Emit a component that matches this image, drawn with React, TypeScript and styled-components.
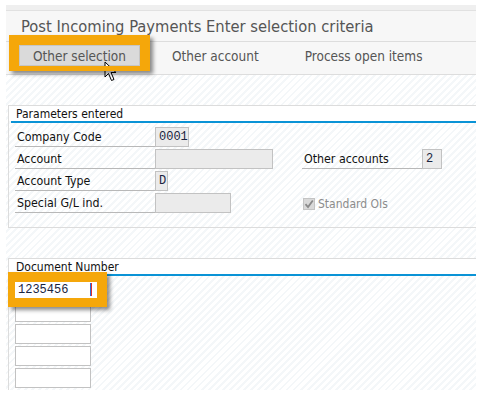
import React from "react";
import styled, { createGlobalStyle, css } from "styled-components";

const UI_FONT = `"DejaVu Sans Condensed", "DejaVu Sans", sans-serif`;
const MONO_FONT = `"Liberation Mono", "DejaVu Sans Mono", monospace`;
const ORANGE = "#f5a70a";
const BLUE = "#0a93d6";

const GlobalStyle = createGlobalStyle`
  html, body { margin: 0; padding: 0; background: #ffffff; }
  body { font-family: ${UI_FONT}; }
  * { box-sizing: border-box; }
`;

const Screen = styled.div`
  width: 470px;
  margin: 5px 0 0 6px;
  display: flex;
  flex-direction: column;
`;

const TopStrip = styled.div`
  height: 6px;
  background: #efefef;
  border-bottom: 1px solid #e1e1e1;
`;

const TitleBar = styled.div`
  height: 31px;
  background: #f7f7f7;
  border-bottom: 1px solid #dddddd;
  display: flex;
  align-items: center;
  padding-left: 15px;
  font-size: 16.4px;
  color: #555555;
  white-space: nowrap;
`;

const Toolbar = styled.div`
  height: 33px;
  background: #f7f7f7;
  border-bottom: 1px solid #dddddd;
  display: flex;
  align-items: flex-start;
  gap: 18px;
  padding: 3px 0 0 13px;
`;

const ToolButton = styled.button<{ $active?: boolean; $highlight?: boolean }>`
  position: relative;
  height: 21px;
  padding: 0 13px;
  border: 1px solid ${(p) => (p.$active ? "#c6c6c6" : "transparent")};
  background: ${(p) => (p.$active ? "#dadada" : "transparent")};
  font-family: ${UI_FONT};
  font-size: 13.5px;
  color: #555555;
  white-space: nowrap;
  cursor: default;
  ${(p) =>
    p.$highlight &&
    css`
      &::after {
        content: "";
        position: absolute;
        left: -11px;
        top: -11px;
        right: -11px;
        bottom: -6px;
        border-style: solid;
        border-color: ${ORANGE};
        border-width: 10px 10px 5px 10px;
        box-shadow: 3px 3px 4px rgba(0, 0, 0, 0.45);
        z-index: 2;
        pointer-events: none;
      }
    `}
`;

const Pointer = styled.svg`
  position: absolute;
  left: 84px;
  top: 15px;
  z-index: 1;
`;

const Body = styled.div`
  height: 315px;
  padding: 30px 0 0 2px;
  display: flex;
  flex-direction: column;
  background: repeating-linear-gradient(
    -45deg,
    #ffffff 0px,
    #ffffff 3px,
    #f4f7f9 3px,
    #f4f7f9 5px
  );
`;

const GroupBox = styled.div<{ $grow?: boolean }>`
  border: 1px solid #dcdcdc;
  border-right: none;
  ${(p) =>
    p.$grow
      ? css`
          flex: 1;
          border-bottom: none;
          margin-top: 30px;
        `
      : css`
          padding-bottom: 14px;
        `}
`;

const GroupHeader = styled.div`
  height: 15px;
  background: #ffffff;
  padding-left: 7px;
  font-size: 12px;
  line-height: 17px;
  color: #111111;
  white-space: nowrap;
  overflow: hidden;
`;

const BlueRule = styled.div`
  height: 2px;
  margin: 0 0 4px 2px;
  background: ${BLUE};
`;

const ParamGrid = styled.div`
  display: grid;
  grid-template-columns: 140px 147px 120px auto;
  grid-auto-rows: 20px;
  row-gap: 2px;
  padding-left: 6px;
`;

const Label = styled.div<{ $col?: number }>`
  grid-column: ${(p) => p.$col ?? 1};
  height: 20px;
  border-bottom: 1px solid #b8b8b8;
  padding-left: 2px;
  font-size: 12.3px;
  line-height: 21px;
  color: #111111;
  white-space: nowrap;
  overflow: hidden;
`;

const Field = styled.div<{ $w: number; $col?: number }>`
  grid-column: ${(p) => p.$col ?? 2};
  width: ${(p) => p.$w}px;
  height: 20px;
  border: 1px solid #c2c2c2;
  background: #ebebeb;
  font-family: ${MONO_FONT};
  font-size: 12px;
  line-height: 19px;
  padding-left: 3px;
  color: #1a2440;
  white-space: nowrap;
`;

const CheckCell = styled.div`
  grid-column: 3;
  display: flex;
  align-items: center;
  gap: 3px;
  padding: 1px 0 0 1px;
  font-size: 12px;
  color: #8c8c8c;
  white-space: nowrap;
`;

const CheckBox = styled.span`
  width: 12px;
  height: 12px;
  background: #d9d9d9;
  border: 1px solid #c4c4c4;
  display: inline-flex;
  align-items: center;
  justify-content: center;
`;

const DocList = styled.div`
  display: flex;
  flex-direction: column;
  gap: 2px;
  padding-left: 6px;
`;

const DocField = styled.div`
  position: relative;
  width: 76px;
  height: 20px;
  border: 1px solid #c2c2c2;
  background: #ffffff;
`;

const HighlightFrame = styled.div`
  position: absolute;
  left: -8px;
  top: -9px;
  width: 99px;
  height: 35px;
  border-style: solid;
  border-color: ${ORANGE};
  border-width: 10px 10px 9px 7px;
  background: #ffffff;
  box-shadow: 3px 3px 4px rgba(0, 0, 0, 0.45);
  font-family: ${MONO_FONT};
  font-size: 12px;
  line-height: 16px;
  padding-left: 3px;
  color: #1a2440;
  z-index: 2;
`;

const Caret = styled.span`
  position: absolute;
  left: 75px;
  top: 1px;
  width: 1px;
  height: 13px;
  background: #2a6fd6;
  box-shadow: 1px 0 0 #e03030;
`;

const params = [
  { label: "Company Code", value: "0001", w: 34 },
  { label: "Account", value: "", w: 118 },
  { label: "Account Type", value: "D", w: 13 },
  { label: "Special G/L ind.", value: "", w: 76 },
];

export default function App() {
  return (
    <>
      <GlobalStyle />
      <Screen>
        <TopStrip />
        <TitleBar>Post Incoming Payments Enter selection criteria</TitleBar>
        <Toolbar>
          <ToolButton $active $highlight>
            Other selection
            <Pointer width="14" height="22" viewBox="0 0 14 22">
              <path
                d="M1 1 L1 16 L4.5 12.5 L7.5 19.5 L10 18.5 L7 11.5 L12 11.5 Z"
                fill="#ffffff"
                stroke="#000000"
                strokeWidth="1"
                strokeLinejoin="miter"
              />
            </Pointer>
          </ToolButton>
          <ToolButton>Other account</ToolButton>
          <ToolButton>Process open items</ToolButton>
        </Toolbar>
        <Body>
          <GroupBox>
            <GroupHeader>Parameters entered</GroupHeader>
            <BlueRule />
            <ParamGrid>
              {params.map((p, i) => (
                <React.Fragment key={p.label}>
                  <Label style={{ gridRow: i + 1 }}>{p.label}</Label>
                  <Field $w={p.w} style={{ gridRow: i + 1 }}>
                    {p.value}
                  </Field>
                  {i === 1 && (
                    <>
                      <Label $col={3} style={{ gridRow: 2 }}>
                        Other accounts
                      </Label>
                      <Field $w={20} $col={4} style={{ gridRow: 2 }}>
                        2
                      </Field>
                    </>
                  )}
                  {i === 3 && (
                    <CheckCell style={{ gridRow: 4 }}>
                      <CheckBox>
                        <svg width="10" height="10" viewBox="0 0 10 10">
                          <path
                            d="M1.5 5.2 L4 8 L8.8 1.5"
                            fill="none"
                            stroke="#8a8a8a"
                            strokeWidth="1.8"
                          />
                        </svg>
                      </CheckBox>
                      Standard OIs
                    </CheckCell>
                  )}
                </React.Fragment>
              ))}
            </ParamGrid>
          </GroupBox>
          <GroupBox $grow>
            <GroupHeader>Document Number</GroupHeader>
            <BlueRule />
            <DocList>
              <DocField>
                <HighlightFrame>
                  1235456
                  <Caret />
                </HighlightFrame>
              </DocField>
              <DocField />
              <DocField />
              <DocField />
              <DocField />
            </DocList>
          </GroupBox>
        </Body>
      </Screen>
    </>
  );
}
